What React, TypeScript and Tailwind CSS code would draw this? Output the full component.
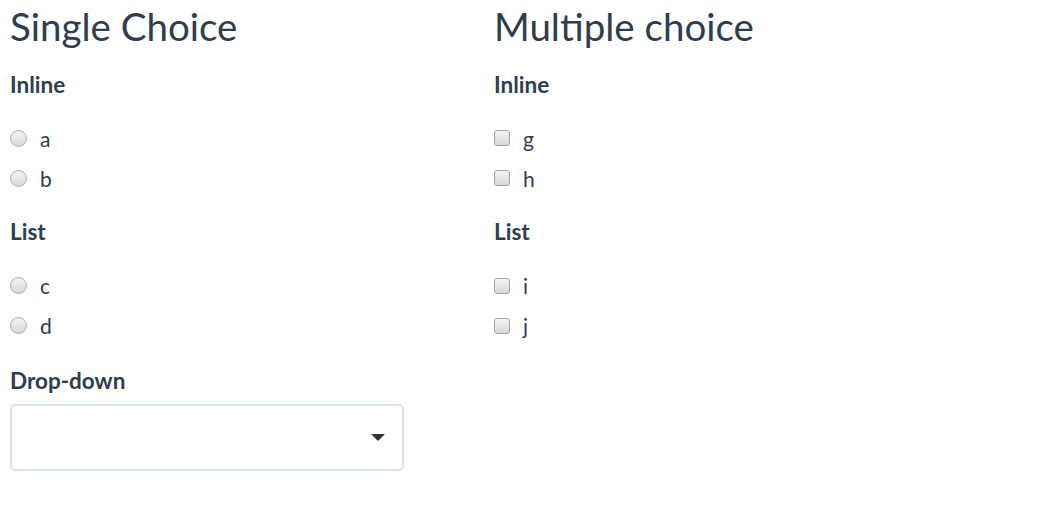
import React from 'react';

const Radio: React.FC<{ label: string }> = ({ label }) => (
  <label className="flex items-center h-[40px]">
    <span className="shrink-0 w-[17px] h-[17px] rounded-full border border-[#adadad] bg-gradient-to-b from-[#f4f4f4] to-[#d8d8d8]" />
    <span className="ml-[13px] text-[21px] leading-none">{label}</span>
  </label>
);

const Check: React.FC<{ label: string }> = ({ label }) => (
  <label className="flex items-center h-[40px]">
    <span className="shrink-0 w-[16px] h-[16px] rounded-[3px] border border-[#a3a3a3] bg-gradient-to-b from-[#f4f4f4] to-[#d8d8d8]" />
    <span className="ml-[13px] text-[21px] leading-none">{label}</span>
  </label>
);

const Label: React.FC<{ children: React.ReactNode }> = ({ children }) => (
  <div className="text-[22.5px] font-bold leading-none">{children}</div>
);

export default function App() {
  return (
    <div className="min-h-screen bg-white text-[#2c3e50] font-['Lato','Liberation_Sans',sans-serif] px-[10px]">
      <div className="flex">
        {/* Single */}
        <div className="w-[484px]">
          <h1 className="text-[38.5px] leading-none pt-[7px]">Single Choice</h1>
          <div className="mt-[28px]">
            <Label>Inline</Label>
          </div>
          <div className="mt-[22px]">
            <Radio label="a" />
            <Radio label="b" />
          </div>
          <div className="mt-[23px]">
            <Label>List</Label>
          </div>
          <div className="mt-[22px]">
            <Radio label="c" />
            <Radio label="d" />
          </div>
          <div className="mt-[24px]">
            <Label>Drop-down</Label>
          </div>
          <div className="mt-[12px] w-[394px] h-[67px] border-2 border-[#dce4ec] rounded-[5px] flex items-center justify-end pr-[17px]">
            <span className="w-0 h-0 border-l-[7px] border-r-[7px] border-t-[7px] border-l-transparent border-r-transparent border-t-[#333]" />
          </div>
        </div>
        {/* Multiple */}
        <div className="w-[485px]">
          <h1 className="text-[38.5px] leading-none pt-[7px]">Multiple choice</h1>
          <div className="mt-[28px]">
            <Label>Inline</Label>
          </div>
          <div className="mt-[22px]">
            <Check label="g" />
            <Check label="h" />
          </div>
          <div className="mt-[23px]">
            <Label>List</Label>
          </div>
          <div className="mt-[22px]">
            <Check label="i" />
            <Check label="j" />
          </div>
        </div>
      </div>
    </div>
  );
}
